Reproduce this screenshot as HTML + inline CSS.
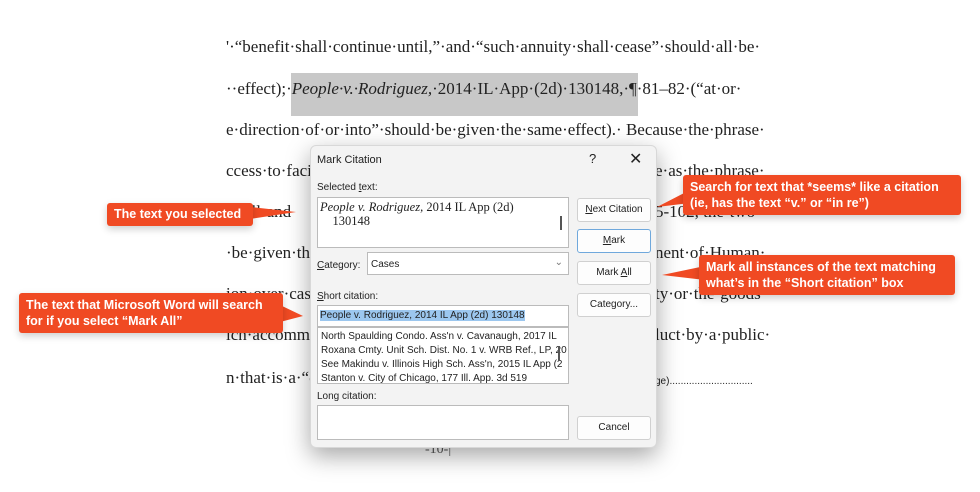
<!DOCTYPE html>
<html><head><meta charset="utf-8"><style>
*{margin:0;padding:0;box-sizing:border-box}
body{width:980px;height:492px;background:#fff;position:relative;overflow:hidden;font-family:"Liberation Serif",serif}
.t{position:absolute;font-size:17px;color:#222;white-space:nowrap;line-height:20px}
.hl{position:absolute;left:291px;top:73px;width:347px;height:43px;background:#c8c8c8}
.dlg{position:absolute;left:310px;top:145px;width:347px;height:303px;background:#f3f3f3;border:1px solid #d8d8d8;border-radius:6px;box-shadow:0 8px 24px rgba(0,0,0,.35);font-family:"Liberation Sans",sans-serif;font-size:10px;color:#222}
.a{position:absolute}
.box{position:absolute;background:#fff;border:1px solid #bbb}
.btn{position:absolute;left:266px;width:74px;height:24px;background:#fdfdfd;border:1px solid #d0d0d0;border-radius:3px;text-align:center;line-height:22px;font-size:10px}
.co{position:absolute;background:#f04a23;color:#fff;font-family:"Liberation Sans",sans-serif;font-size:12.5px;font-weight:bold;line-height:16px;padding:4px 7px;border-radius:3px;box-shadow:0 3px 8px rgba(0,0,0,.2)}
u{text-decoration:underline}
</style></head><body>
<div class="hl"></div>
<div class="t" style="left:226px;top:37px">'·“benefit·shall·continue·until,”·and·“such·annuity·shall·cease”·should·all·be·</div>
<div class="t" style="left:226px;top:79px">··effect);·<i>People·v.·Rodriguez,</i>·2014·IL·App·(2d)·130148,·¶·81–82·(“at·or·</div>
<div class="t" style="left:226px;top:120px">e·direction·of·or·into”·should·be·given·the·same·effect).· Because·the·phrase·</div>
<div class="t" style="left:226px;top:161px">ccess·to·facilities</div>
<div class="t" style="left:655px;top:161px">e·as·the·phrase·</div>
<div class="t" style="left:226px;top:202px">··full·and</div>
<div class="t" style="left:655px;top:202px">5-102, the·two</div>
<div class="t" style="left:226px;top:243px">·be·given·the</div>
<div class="t" style="left:655px;top:243px">nent·of·Human·</div>
<div class="t" style="left:226px;top:284px">ion·over·case</div>
<div class="t" style="left:655px;top:284px">ty·or·the·goods</div>
<div class="t" style="left:226px;top:325px">ich·accomm</div>
<div class="t" style="left:655px;top:325px">luct·by·a·public·</div>
<div class="t" style="left:226px;top:368px">n·that·is·a·“c</div>
<div class="t" style="left:655px;top:372px;font-size:10px;font-family:'Liberation Sans',sans-serif">ge)..............................</div>
<div class="t" style="left:425px;top:440px;font-size:14px;color:#555">-10-|</div>

<div class="dlg">
 <div class="a" style="left:6px;top:8px;font-size:11px">Mark Citation</div>
 <div class="a" style="left:278px;top:5px;font-size:13px">?</div>
 <div class="a" style="left:318px;top:3px;font-size:16px">✕</div>
 <div class="a" style="left:6px;top:36px">Selected <u>t</u>ext:</div>
 <div class="box" style="left:6px;top:51px;width:252px;height:51px;font-family:'Liberation Serif',serif;font-size:12.5px;padding:2px 2px;line-height:14px"><i>People v. Rodriguez,</i> 2014 IL App (2d)<br>&nbsp;&nbsp;&nbsp;&nbsp;130148<div class="a" style="left:242px;top:18px;width:2px;height:14px;background:#555"></div></div>
 <div class="a" style="left:6px;top:114px"><u>C</u>ategory:</div>
 <div class="box" style="left:56px;top:106px;width:202px;height:23px;padding:6px 3px">Cases<span class="a" style="right:5px;top:4px;color:#777">⌄</span></div>
 <div class="a" style="left:6px;top:145px"><u>S</u>hort citation:</div>
 <div class="box" style="left:6px;top:159px;width:252px;height:22px;padding:4px 2px"><span style="background:#9cc7ef">People v. Rodriguez, 2014 IL App (2d) 130148</span></div>
 <div class="box" style="left:6px;top:181px;width:252px;height:57px;padding:2px 3px;line-height:14px;overflow:hidden;white-space:nowrap">North Spaulding Condo. Ass'n v. Cavanaugh, 2017 IL<br>Roxana Cmty. Unit Sch. Dist. No. 1 v. WRB Ref., LP, 20<br>See Makindu v. Illinois High Sch. Ass'n, 2015 IL App (2<br>Stanton v. City of Chicago, 177 Ill. App. 3d 519<div class="a" style="left:240px;top:18px;width:2px;height:15px;background:#555"></div></div>
 <div class="a" style="left:6px;top:245px">Long citation:</div>
 <div class="box" style="left:6px;top:259px;width:252px;height:35px"></div>
 <div class="btn" style="top:52px"><u>N</u>ext Citation</div>
 <div class="btn" style="top:83px;border-color:#6fa8dc"><u>M</u>ark</div>
 <div class="btn" style="top:115px">Mark <u>A</u>ll</div>
 <div class="btn" style="top:147px">Category...</div>
 <div class="btn" style="top:270px">Cancel</div>
</div>

<svg class="a" style="left:0;top:0" width="980" height="492">
 <polygon points="250,207 296,212 250,219" fill="#f04a23"/>
 <polygon points="690,190 657,207 690,203" fill="#f04a23"/>
 <polygon points="705,266 662,275 705,280" fill="#f04a23"/>
 <polygon points="280,305 303,316 280,322" fill="#f04a23"/>
</svg>
<div class="co" style="left:107px;top:203px;width:146px;height:23px;padding-top:3px">The text you selected</div>
<div class="co" style="left:683px;top:175px;width:278px;height:40px">Search for text that *seems* like a citation<br>(ie, has the text “v.” or “in re”)</div>
<div class="co" style="left:699px;top:255px;width:256px;height:40px">Mark all instances of the text matching<br>what’s in the “Short citation” box</div>
<div class="co" style="left:19px;top:293px;width:264px;height:40px">The text that Microsoft Word will search<br>for if you select “Mark All”</div>
</body></html>
